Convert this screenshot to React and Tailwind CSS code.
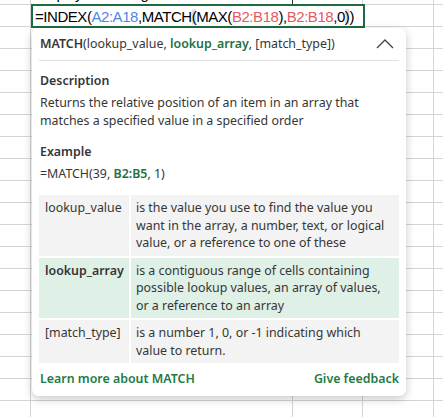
import React from "react";

const ROWS = 20;

function GridRow({ h = "h-[22px]" }) {
  return (
    <div className={`flex ${h} border-b border-[#d4d4d4]`}>
      <div className="w-[31px] shrink-0 border-r border-[#d4d4d4]" />
      <div className="w-[262px] shrink-0 border-r border-[#d4d4d4]" />
      <div className="w-[70px] shrink-0 border-r border-[#d4d4d4]" />
      <div className="w-[71px] shrink-0 border-r border-[#d4d4d4]" />
      <div className="flex-1" />
    </div>
  );
}

const ARGS = [
  {
    name: "lookup_value",
    text: "is the value you use to find the value you want in the array, a number, text, or logical value, or a reference to one of these",
    active: false,
  },
  {
    name: "lookup_array",
    text: "is a contiguous range of cells containing possible lookup values, an array of values, or a reference to an array",
    active: true,
  },
  {
    name: "[match_type]",
    text: "is a number 1, 0, or -1 indicating which value to return.",
    active: false,
  },
];

export default function App() {
  return (
    <div className="relative w-[443px] h-[417px] overflow-hidden bg-white font-['Segoe_UI','Noto_Sans',sans-serif]">
      {/* sheet grid */}
      <div className="flex flex-col">
        <div className="flex h-[5px] border-b border-[#d4d4d4]">
          <div className="w-[31px] shrink-0 border-r border-[#d4d4d4]" />
          <div className="w-[262px] shrink-0 border-r border-[#333] relative">
            <span className="absolute left-[4px] top-[-15px] text-[15px] leading-[18px] tracking-[-0.5px] text-black whitespace-nowrap font-['Liberation_Sans',sans-serif]">
              Employee with highest sales in A2:A18
            </span>
          </div>
          <div className="w-[70px] shrink-0 border-r border-[#d4d4d4]" />
          <div className="w-[71px] shrink-0 border-r border-[#d4d4d4]" />
          <div className="flex-1" />
        </div>
        {Array.from({ length: ROWS }).map((_, i) => (
          <GridRow key={i} />
        ))}
      </div>

      {/* active cell with formula */}
      <div className="absolute left-[31px] top-[4px] w-[334px] h-[24px] border-2 border-[#1e6b41] bg-white flex items-center pl-[2px] text-[15px] tracking-[-0.45px] leading-none text-black whitespace-nowrap font-['Liberation_Sans',sans-serif]">
        <span>=INDEX(</span>
        <span className="text-[#4f86e6]">A2:A18</span>
        <span>,MATCH</span>
        <span className="bg-[#e3e3e3]">(</span>
        <span>MAX(</span>
        <span className="text-[#e8585f]">B2:B18</span>
        <span>),</span>
        <span className="text-[#e8585f]">B2:B18</span>
        <span>,0</span>
        <span className="bg-[#e3e3e3]">)</span>
        <span>)</span>
      </div>

      {/* function tooltip card */}
      <div className="absolute left-[32px] top-[28px] w-[374px] h-[368px] bg-white rounded-[7px] shadow-[0_3px_10px_rgba(0,0,0,0.22)] px-[7px] text-[#363636] flex flex-col">
        <div className="flex items-center justify-between h-[33px] shrink-0 border-b border-[#e0e0e0] text-[12.4px]">
          <div className="pl-[1px] whitespace-nowrap">
            <span className="font-semibold">MATCH</span>
            <span>(lookup_value, </span>
            <span className="font-semibold text-[#1e7145]">lookup_array</span>
            <span>, [match_type])</span>
          </div>
          <svg width="18" height="10" viewBox="0 0 18 10" className="mr-[5px]">
            <polyline points="1,9 9,1 17,9" fill="none" stroke="#444" strokeWidth="1.3" />
          </svg>
        </div>

        <div className="pl-[1px] text-[12.4px] leading-[18px]">
          <div className="mt-[11px] font-semibold">Description</div>
          <div className="mt-[4px]">
            Returns the relative position of an item in an array that
            <br />
            matches a specified value in a specified order
          </div>
          <div className="mt-[13px] font-semibold">Example</div>
          <div className="mt-[4px]">
            =MATCH(39, <span className="font-semibold text-[#1e7145]">B2:B5</span>, 1)
          </div>
        </div>

        <div className="mt-[12px] flex flex-col gap-[2px] text-[12.4px] leading-[17.5px]">
          {ARGS.map((a) => (
            <div
              key={a.name}
              className={`flex ${a.active ? "bg-[#dff0e6]" : "bg-[#f3f3f3]"}`}
            >
              <div
                className={`w-[90px] shrink-0 pl-[6px] py-[4px] ${a.active ? "font-semibold" : ""}`}
              >
                {a.name}
              </div>
              <div className="w-[2px] shrink-0 bg-white" />
              <div className="flex-1 pl-[5px] pr-[6px] py-[4px]">{a.text}</div>
            </div>
          ))}
        </div>

        <div className="mt-auto mb-[8px] flex justify-between pl-[1px] text-[12.4px] leading-[18px] font-semibold text-[#1f7a44]">
          <span>Learn more about MATCH</span>
          <span>Give feedback</span>
        </div>
      </div>
    </div>
  );
}
